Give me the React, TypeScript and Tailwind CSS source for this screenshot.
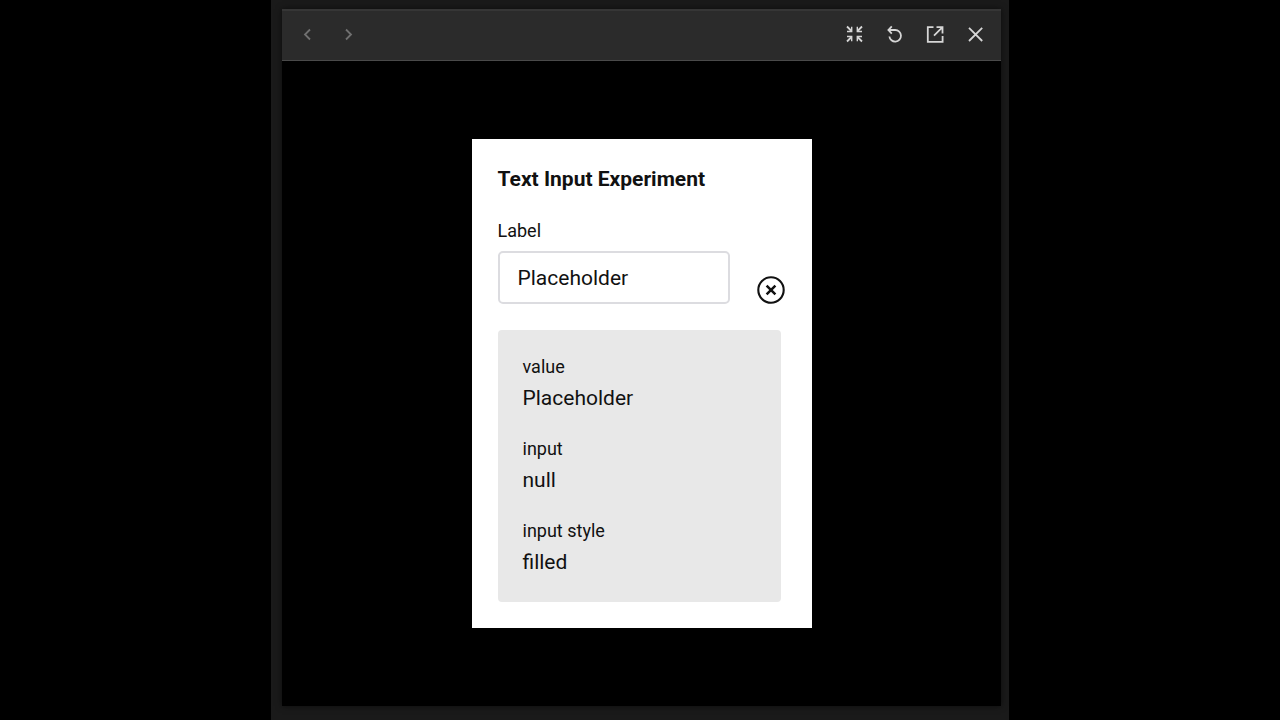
import { useState } from 'react';

const iconButton = 'flex h-6 w-6 items-center justify-center text-[#d6d6d6] hover:text-white disabled:text-[#707070]';

function CollapseIcon() {
  return (
    <svg viewBox="0 0 20 20" className="h-5 w-5 shrink-0" fill="none" stroke="currentColor" strokeWidth="1.8">
      <path d="M2 1.5l4 4M17 1.5l-4 4M2 16.5l4-4M17 16.5l-4-4" />
      <path
        d="M7.4 1.8v5.4H2V5.8h2.6L6 4.4V1.8zM11.6 1.8v5.4H17V5.8h-2.6L13 4.4V1.8zM7.4 16.2v-5.4H2v1.4h2.6L6 13.6v2.6zM11.6 16.2v-5.4H17v1.4h-2.6L13 13.6v2.6z"
        fill="currentColor"
        stroke="none"
      />
    </svg>
  );
}

function RestartIcon() {
  return (
    <svg viewBox="0 0 20 20" className="h-5 w-5 shrink-0" fill="none" stroke="currentColor" strokeWidth="1.8">
      <path d="M4 5h6.2a5.8 5.8 0 1 1-5.8 6.5" />
      <path d="M6.8 1.4L3.4 5l3.4 3.6" />
    </svg>
  );
}

function OpenIcon() {
  return (
    <svg viewBox="0 0 20 20" className="h-5 w-5 shrink-0" fill="none" stroke="currentColor" strokeWidth="1.8">
      <path d="M8.5 2.2H2.8v14.6h14.8V11" />
      <path d="M11.5 2.2h6v6.3M17.5 2.2L9 10.7" />
    </svg>
  );
}

function CloseIcon() {
  return (
    <svg viewBox="0 0 20 20" className="h-5 w-5 shrink-0" fill="none" stroke="currentColor" strokeWidth="1.8">
      <path d="M4 2.8L17.2 16M17.2 2.8L4 16" />
    </svg>
  );
}

function Chevron({ d }: { d: string }) {
  return (
    <svg viewBox="0 0 20 20" className="h-5 w-5 shrink-0" fill="none" stroke="currentColor" strokeWidth="1.8">
      <path d={d} />
    </svg>
  );
}

function ClearIcon() {
  return (
    <svg viewBox="0 0 28 28" className="h-7 w-7" fill="none" stroke="currentColor" strokeWidth="2.1">
      <circle cx="14" cy="14" r="12.7" />
      <path d="M9.6 9.6l8.8 8.8M18.4 9.6l-8.8 8.8" strokeWidth="2.5" />
    </svg>
  );
}

function Toolbar() {
  return (
    <header className="flex h-[52px] shrink-0 items-center justify-between border-t-2 border-b border-t-[#363636] border-b-[#4a4a4a] bg-[#2b2b2b] px-[14px] pb-[2px]">
      <div className="flex gap-4">
        <button type="button" aria-label="Previous" disabled className={iconButton}>
          <Chevron d="M12 4.5l-5 5 5 5" />
        </button>
        <button type="button" aria-label="Next" disabled className={iconButton}>
          <Chevron d="M8 4.5l5 5-5 5" />
        </button>
      </div>
      <div className="flex gap-4">
        <button type="button" aria-label="Collapse" className={iconButton}>
          <CollapseIcon />
        </button>
        <button type="button" aria-label="Restart" className={iconButton}>
          <RestartIcon />
        </button>
        <button type="button" aria-label="Open in new window" className={iconButton}>
          <OpenIcon />
        </button>
        <button type="button" aria-label="Close" className={iconButton}>
          <CloseIcon />
        </button>
      </div>
    </header>
  );
}

export default function App() {
  const [value, setValue] = useState('Placeholder');

  const states = [
    { name: 'value', value },
    { name: 'input', value: 'null' },
    { name: 'input style', value: 'filled' },
  ];

  return (
    <div className="flex min-h-screen justify-center bg-black font-[Roboto,sans-serif]">
      <div className="flex w-full max-w-[738px] flex-col bg-[#1a1a1a] pt-[9px] pr-2 pb-[14px] pl-[11px]">
        <div className="flex flex-1 flex-col bg-black shadow-[0_0_6px_rgba(0,0,0,0.6)]">
          <Toolbar />

          <main className="flex flex-1 items-center justify-center">
            <section className="w-[340px] bg-white p-[26px] text-[#111111]">
              <h1 className="text-[21px] leading-7 font-bold">Text Input Experiment</h1>

              <div className="mt-[26px] flex items-end gap-[27px]">
                <div className="w-[232px]">
                  <label htmlFor="field" className="block text-[18px] leading-6">
                    Label
                  </label>
                  <input
                    id="field"
                    type="text"
                    value={value}
                    onChange={(e) => setValue(e.target.value)}
                    className="mt-2 block h-[53px] w-full rounded-[5px] border-2 border-[#dcdce0] bg-white px-[18px] text-[21px] outline-none focus:border-[#9a9aa2]"
                  />
                </div>
                <button type="button" aria-label="Clear" onClick={() => setValue('')}>
                  <ClearIcon />
                </button>
              </div>

              <dl className="mt-[26px] mr-[5px] flex flex-col gap-[25px] rounded-[4px] bg-[#e8e8e8] px-[25px] pt-[25px] pb-[26px]">
                {states.map((s) => (
                  <div key={s.name} className="flex flex-col gap-[5px]">
                    <dt className="text-[18px] leading-6">{s.name}</dt>
                    <dd className="min-h-7 text-[21px] leading-7">{s.value}</dd>
                  </div>
                ))}
              </dl>
            </section>
          </main>
        </div>
      </div>
    </div>
  );
}
